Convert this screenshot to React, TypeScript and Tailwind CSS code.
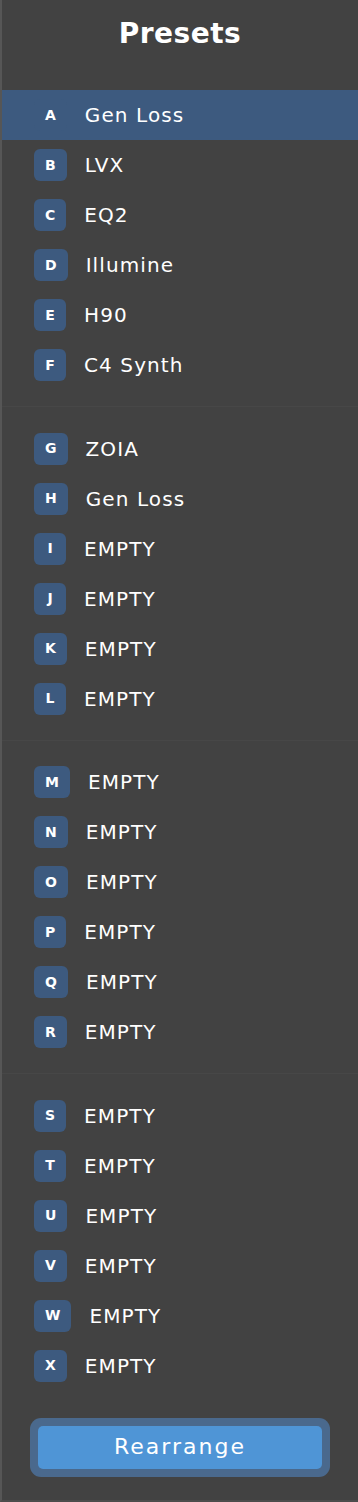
import React from 'react';

const groups = [
  [
    { key: 'A', name: 'Gen Loss' },
    { key: 'B', name: 'LVX' },
    { key: 'C', name: 'EQ2' },
    { key: 'D', name: 'Illumine' },
    { key: 'E', name: 'H90' },
    { key: 'F', name: 'C4 Synth' },
  ],
  [
    { key: 'G', name: 'ZOIA' },
    { key: 'H', name: 'Gen Loss' },
    { key: 'I', name: 'EMPTY' },
    { key: 'J', name: 'EMPTY' },
    { key: 'K', name: 'EMPTY' },
    { key: 'L', name: 'EMPTY' },
  ],
  [
    { key: 'M', name: 'EMPTY' },
    { key: 'N', name: 'EMPTY' },
    { key: 'O', name: 'EMPTY' },
    { key: 'P', name: 'EMPTY' },
    { key: 'Q', name: 'EMPTY' },
    { key: 'R', name: 'EMPTY' },
  ],
  [
    { key: 'S', name: 'EMPTY' },
    { key: 'T', name: 'EMPTY' },
    { key: 'U', name: 'EMPTY' },
    { key: 'V', name: 'EMPTY' },
    { key: 'W', name: 'EMPTY' },
    { key: 'X', name: 'EMPTY' },
  ],
];

function PresetRow({ slot, name, active }: { slot: string; name: string; active?: boolean }) {
  return (
    <div className={`flex items-center h-[50px] pl-[32px] ${active ? 'bg-[#3d5a7f]' : ''}`}>
      <div className="flex items-center justify-center min-w-[32px] h-[32px] px-[11px] rounded-[6px] bg-[#3d5a7f] text-white text-[14px] font-bold">
        {slot}
      </div>
      <span className="ml-[18px] text-white text-[20px] tracking-[1.1px]">{name}</span>
    </div>
  );
}

export default function App() {
  return (
    <div
      className="w-[358px] h-[1502px] bg-[#424242] border-l-2 border-[#565656] border-b-2 border-b-[#4c4c4c] flex flex-col"
      style={{ fontFamily: '"DejaVu Sans", "Open Sans", sans-serif' }}
    >
      <div className="h-[90px] flex justify-center pt-[14px]">
        <h1 className="text-white text-[28px] font-bold leading-[40px] tracking-[0.5px]">Presets</h1>
      </div>

      {groups.map((group, gi) => (
        <div key={gi}>
          {group.map((p) => (
            <PresetRow key={p.key} slot={p.key} name={p.name} active={p.key === 'A'} />
          ))}
          {gi < groups.length - 1 && (
            <div className="h-[33.5px] flex items-center">
              <div className="w-full h-px bg-[#474747]" />
            </div>
          )}
        </div>
      ))}

      {/* Rearrange */}
      <div className="px-[28px] pt-[27px]">
        <div className="p-[8px] rounded-[11px] bg-[#4a698d]">
          <button className="w-full h-[43px] rounded-[5px] bg-[#4f95d6] text-white text-[22px] tracking-[2px] leading-none">
            Rearrange
          </button>
        </div>
      </div>
    </div>
  );
}
